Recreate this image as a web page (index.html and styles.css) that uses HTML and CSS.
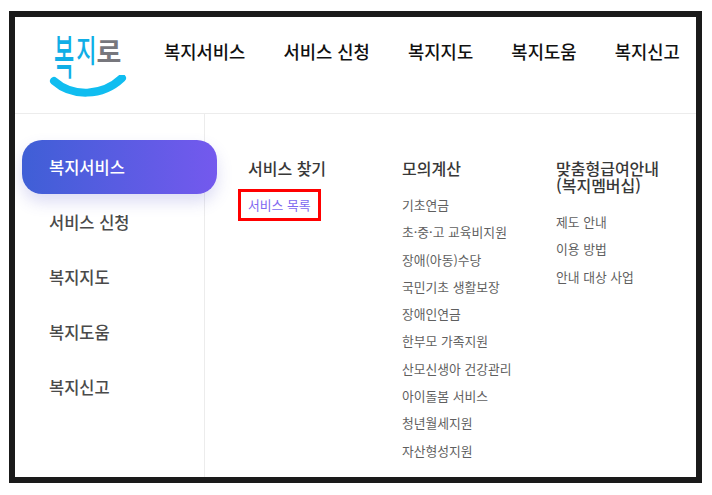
FILE: index.html
```html
<!DOCTYPE html>
<html lang="ko">
<head>
    <meta charset="UTF-8">
    <meta name="viewport" content="width=device-width, initial-scale=1.0">
    <title>복지로</title>
    <link rel="stylesheet" href="styles.css">
</head>
<body>

<div class="frame">
    <!-- 상단 메뉴 -->
    <header class="header">
        <a class="logo">
            <span class="logo-text"><span class="logo-bok">복</span><span class="logo-ji">지</span><span class="logo-ro">로</span></span>
            <svg class="logo-smile" width="80" height="24" viewBox="0 0 80 24">
                <path d="M6 6 C 24 22, 54 22, 74 3" fill="none" stroke="#10bdf0" stroke-width="8" stroke-linecap="round"/>
            </svg>
        </a>
        <nav class="top-nav">
            <a>복지서비스</a>
            <a>서비스 신청</a>
            <a>복지지도</a>
            <a>복지도움</a>
            <a>복지신고</a>
        </nav>
    </header>

    <div class="content">
        <!-- 왼쪽 메뉴 -->
        <aside class="side-menu">
            <a class="side-item active">복지서비스</a>
            <a class="side-item">서비스 신청</a>
            <a class="side-item">복지지도</a>
            <a class="side-item">복지도움</a>
            <a class="side-item">복지신고</a>
        </aside>

        <!-- 하위 메뉴 -->
        <div class="sub-menu">
            <section class="sub-col">
                <h3>서비스 찾기</h3>
                <ul>
                    <li class="selected"><a>서비스 목록</a></li>
                </ul>
            </section>
            <section class="sub-col">
                <h3>모의계산</h3>
                <ul>
                    <li>기초연금</li>
                    <li>초·중·고 교육비지원</li>
                    <li>장애(아동)수당</li>
                    <li>국민기초 생활보장</li>
                    <li>장애인연금</li>
                    <li>한부모 가족지원</li>
                    <li>산모신생아 건강관리</li>
                    <li>아이돌봄 서비스</li>
                    <li>청년월세지원</li>
                    <li>자산형성지원</li>
                </ul>
            </section>
            <section class="sub-col">
                <h3>맞춤형급여안내<br>(복지멤버십)</h3>
                <ul>
                    <li>제도 안내</li>
                    <li>이용 방법</li>
                    <li>안내 대상 사업</li>
                </ul>
            </section>
        </div>
    </div>
</div>

</body>
</html>
```

FILE: styles.css
```css
* {
    margin: 0;
    padding: 0;
    box-sizing: border-box;
}
body {
    font-family: "Noto Sans CJK KR", "Noto Sans", sans-serif;
    background-color: #fff;
}
.frame {
    width: 693px;
    height: 472px;
    margin: 11px 0 0 9px;
    border: 6px solid #1a1a1a;
    overflow: hidden;
    background-color: #fff;
}
/* 상단 메뉴 */
.header {
    display: flex;
    height: 97px;
    border-bottom: 1px solid #ececec;
}
.logo {
    display: flex;
    flex-direction: column;
    width: 149px;
    padding: 7px 0 0 33px;
}
.logo-text {
    display: flex;
    height: 50px;
    margin-left: 6px;
    line-height: 50px;
    font-weight: 500;
    white-space: nowrap;
}
.logo-bok {
    font-size: 22px;
    color: #10aee6;
    transform: translateY(4px) scaleY(2.1);
}
.logo-ji {
    font-size: 22px;
    margin-left: 2px;
    color: #10aee6;
    transform: translateY(-1px) scaleY(1.4);
}
.logo-ro {
    font-size: 27px;
    font-weight: 700;
    color: #77777d;
    margin-left: 0;
    transform: translateY(2px);
}
.logo-smile {
    display: block;
    margin-top: 1px;
}
.top-nav {
    display: flex;
    gap: 38.2px;
    padding-top: 20px;
    font-size: 17.7px;
    line-height: 28px;
    font-weight: 500;
    color: #111;
    white-space: nowrap;
}
/* 본문 */
.content {
    display: flex;
    height: 363px;
}
.side-menu {
    width: 190px;
    flex: none;
    padding: 26px 0 0 7px;
    border-right: 1px solid #ececec;
}
.side-item {
    display: flex;
    align-items: center;
    height: 55px;
    padding-left: 27px;
    font-size: 16.5px;
    font-weight: 500;
    color: #4a4a4a;
}
.side-item.active {
    width: 195px;
    height: 54px;
    border-radius: 20px;
    color: #fff;
    background: linear-gradient(90deg, #3f5fd6, #7459ee);
    box-shadow: 0 8px 16px rgba(80, 80, 200, 0.2);
}
/* 하위 메뉴 */
.sub-menu {
    display: flex;
    padding: 46px 0 0 43px;
}
.sub-col {
    width: 154px;
    flex: none;
}
.sub-col h3 {
    font-size: 16px;
    line-height: 17px;
    font-weight: 500;
    color: #383838;
}
.sub-col ul {
    list-style: none;
    margin-top: 14px;
}
.sub-col li {
    height: 27.3px;
    font-size: 12.8px;
    line-height: 27px;
    color: #5f5f5f;
    white-space: nowrap;
}
.sub-col li.selected {
    position: relative;
    color: #8068f0;
}
/* 빨간 강조 박스 */
.sub-col li.selected::after {
    content: "";
    box-sizing: border-box;
    position: absolute;
    left: -10px;
    top: -2px;
    width: 83px;
    height: 32px;
    border: 3px solid #f00;
}
```
